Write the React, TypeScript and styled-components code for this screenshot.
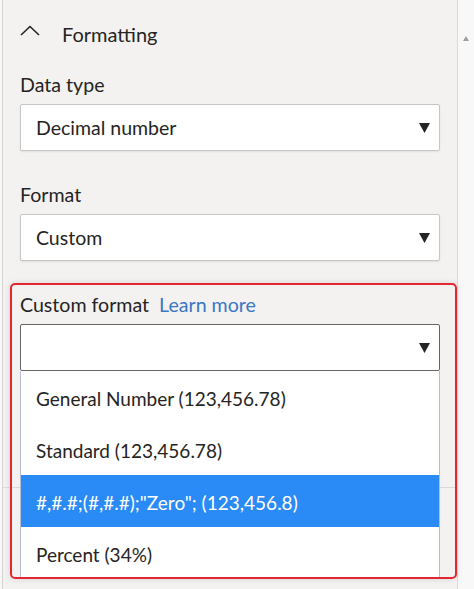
import styled, { createGlobalStyle } from "styled-components";

const GlobalStyle = createGlobalStyle`
    html, body {
        margin: 0;
        padding: 0;
        background: #f8f8f8;
    }
    body {
        font-family: "Lato", "Open Sans", sans-serif;
        color: #252423;
    }
`

const Page = styled.div`
    display: flex;
    height: 589px;
    overflow: hidden;
    padding-left: 2px;
`

const Panel = styled.div`
    width: 456px;
    flex: none;
    border-left: 1px solid #d6d4d2;
    border-right: 1px solid #dcdad8;
    /* section divider that runs under the open dropdown */
    background: linear-gradient(#dcdad8, #dcdad8) 0 487px / 100% 1px no-repeat, #f3f2f1;
    padding: 20px 17px 0 17px;
    box-sizing: border-box;
    display: flex;
    flex-direction: column;
`

const Gutter = styled.div`
    flex: 1;
    padding: 25px 0 0 5px;
`

const Header = styled.div`
    display: flex;
    align-items: flex-start;
    gap: 22px;
    margin-bottom: 23px;
    font-size: 20px;
    line-height: 28px;
    svg {
        margin-top: 5px;
    }
`

const Field = styled.div<{ $gap: number }>`
    display: flex;
    flex-direction: column;
    gap: 5px;
    margin-bottom: ${props => props.$gap}px;
`

const Label = styled.div`
    font-size: 19.6px;
    line-height: 28px;
    display: flex;
    gap: 10px;
`

const Link = styled.span`
    color: #3a77c5;
`

const SelectBox = styled.div<{ $focused?: boolean }>`
    height: 47px;
    box-sizing: border-box;
    background: #ffffff;
    border: 1px solid ${props => props.$focused ? "#666564" : "#c8c6c4"};
    border-width: ${props => props.$focused ? "1.5px" : "1px"};
    border-radius: 2px;
    box-shadow: ${props => props.$focused ? "none" : "0 1px 2px rgba(0,0,0,0.08)"};
    display: flex;
    align-items: center;
    justify-content: space-between;
    padding: 0 9px 0 15px;
    font-size: 19.5px;
`

const Highlight = styled.div`
    margin: 0 -17px 0 -10px;
    height: 296px;
    box-sizing: border-box;
    border: 2px solid #e3262f;
    border-radius: 5px;
    box-shadow: 0 0 6px rgba(0, 0, 0, 0.12);
    padding: 6px 15px 0 8px;
    overflow: hidden;
    display: flex;
    flex-direction: column;
`

const List = styled.div`
    background: #ffffff;
    border-left: 1px solid #b3bdd3;
    border-right: 1px solid #b3bdd3;
`

const Item = styled.div<{ $selected?: boolean }>`
    height: 52px;
    display: flex;
    align-items: center;
    padding: 2px 0 0 15px;
    box-sizing: border-box;
    font-size: 19px;
    background: ${props => props.$selected ? "#2a8af6" : "#ffffff"};
    color: ${props => props.$selected ? "#ffffff" : "#252423"};
`

function Caret() {
    return (
        <svg width="11" height="10" viewBox="0 0 11 10">
            <polygon points="0,0 11,0 5.5,10" fill="#252423" />
        </svg>
    );
}

function Chevron() {
    return (
        <svg width="20" height="11" viewBox="0 0 20 11">
            <polyline points="1,10 10,1.5 19,10" fill="none" stroke="#252423" strokeWidth="1.6" />
        </svg>
    );
}

const options = [
    "General Number (123,456.78)",
    "Standard (123,456.78)",
    "#,#.#;(#,#.#);\"Zero\"; (123,456.8)",
    "Percent (34%)",
];

export default function App() {
    return (
        <>
            <GlobalStyle />
            <Page>
                <Panel>
                    <Header><Chevron /><span>Formatting</span></Header>

                    <Field $gap={30}>
                        <Label>Data type</Label>
                        <SelectBox><span>Decimal number</span><Caret /></SelectBox>
                    </Field>

                    <Field $gap={22}>
                        <Label>Format</Label>
                        <SelectBox><span>Custom</span><Caret /></SelectBox>
                    </Field>

                    <Highlight>
                        <Field $gap={0}>
                            <Label>Custom format<Link>Learn more</Link></Label>
                            <div>
                                <SelectBox $focused><span /><Caret /></SelectBox>
                                <List>
                                    {options.map((o, i) => (
                                        <Item key={o} $selected={i === 2}>{o}</Item>
                                    ))}
                                </List>
                            </div>
                        </Field>
                    </Highlight>
                </Panel>
                <Gutter>
                    <svg width="6" height="5" viewBox="0 0 6 5">
                        <polygon points="0,5 6,5 3,0" fill="#a19f9d" />
                    </svg>
                </Gutter>
            </Page>
        </>
    );
}
